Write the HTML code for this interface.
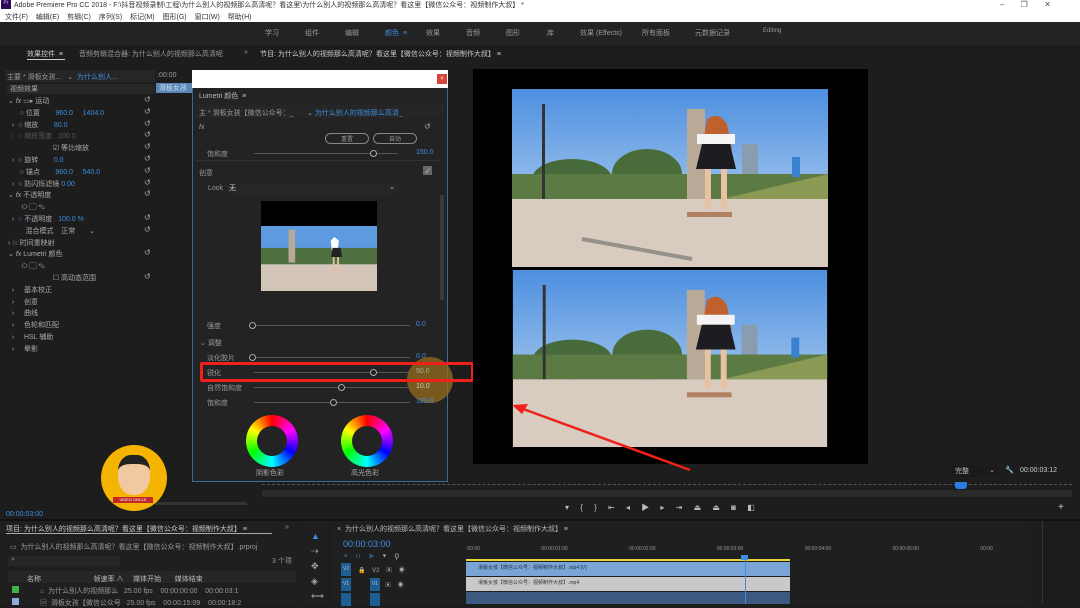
<!DOCTYPE html><html><head><meta charset="utf-8"><style>
*{margin:0;padding:0;box-sizing:border-box}
body{width:1080px;height:604px;background:#1d1d1d;position:relative;overflow:hidden;font-family:"Liberation Sans","Noto Sans CJK SC",sans-serif;font-size:7px;color:#9a9a9a}
.a{position:absolute;white-space:nowrap}
.b{color:#3c8fe0}
.hl{position:absolute;height:1px;background:#555}
.knob{position:absolute;width:7px;height:7px;border:1.5px solid #aaa;border-radius:50%;background:#222}
</style></head><body>
<!-- title bar -->
<div class="a" style="left:0;top:0;width:1080px;height:22px;background:#fff"></div>
<div class="a" style="left:1px;top:0;width:10px;height:9px;background:#2b0b52;color:#e0a0ff;font-size:5px;text-align:center">Pr</div>
<div class="a" style="left:14px;top:0;font-size:7px;color:#333">Adobe Premiere Pro CC 2018 - F:\抖音视频录制\工程\为什么别人的视频那么高清呢？看这里\为什么别人的视频那么高清呢？看这里【微信公众号：视频制作大叔】 *</div>
<div class="a" style="left:5px;top:12px;font-size:7px;color:#333;word-spacing:6px">文件(F) 编辑(E) 剪辑(C) 序列(S) 标记(M) 图形(G) 窗口(W) 帮助(H)</div>
<div class="a" style="left:1000px;top:0;font-size:8px;color:#555;word-spacing:14px">– ❐ ✕</div>
<!-- workspace bar -->
<div class="a" style="left:0;top:22px;width:1080px;height:23px;background:#232323"></div>
<div class="a" style="left:265px;top:28px;font-size:7px;color:#999">学习</div>
<div class="a" style="left:305px;top:28px;color:#999">组件</div>
<div class="a" style="left:345px;top:28px;color:#999">编辑</div>
<div class="a" style="left:385px;top:28px;color:#3c8fe0">颜色 &nbsp;≡</div>
<div class="a" style="left:426px;top:28px;color:#999">效果</div>
<div class="a" style="left:466px;top:28px;color:#999">音频</div>
<div class="a" style="left:506px;top:28px;color:#999">图形</div>
<div class="a" style="left:547px;top:28px;color:#999">库</div>
<div class="a" style="left:580px;top:28px;color:#999">效果 (Effects)</div>
<div class="a" style="left:642px;top:28px;color:#999">所有面板</div>
<div class="a" style="left:695px;top:28px;color:#999">元数据记录</div>
<div class="a" style="left:763px;top:28px;color:#999;font-size:6px">Editing</div>
<!-- panel headers -->
<div class="a" style="left:27px;top:49px;color:#ccc">效果控件 &nbsp;≡</div>
<div class="a" style="left:27px;top:59px;width:38px;height:1px;background:#ccc"></div>
<div class="a" style="left:79px;top:49px;color:#999">音频剪辑混合器: 为什么别人的视频那么高清呢</div>
<div class="a" style="left:244px;top:49px;color:#999">»</div>
<div class="a" style="left:260px;top:49px;color:#ccc">节目: 为什么别人的视频那么高清呢？看这里【微信公众号：视频制作大叔】 ≡</div>
<!-- effect controls -->
<div class="a" style="left:5px;top:70px;width:150px;height:12px;background:#262626"></div>
<div class="a" style="left:7px;top:72px;color:#999">主要 * 滑板女孩...&nbsp;&nbsp;&nbsp;⌄&nbsp; <span class="b">为什么别人...</span></div>
<div class="a" style="left:157px;top:72px;color:#999">:00:00</div>
<div class="a" style="left:156px;top:83px;width:36px;height:10px;background:#5a86b8;color:#ccdff0;padding-left:3px">滑板女孩</div>
<div class="a" style="left:7px;top:84px;width:148px;height:10px;background:#262626;padding-left:3px;color:#aaa">视频效果</div>
<div class="a" style="left:8px;top:96px;line-height:11.8px;color:#aaa">
⌄ <i>fx</i> ▭▸ 运动<br>&nbsp;&nbsp;&nbsp;&nbsp;&nbsp;&nbsp;○ 位置 &nbsp;&nbsp;&nbsp;&nbsp;&nbsp;&nbsp;&nbsp;<span class="b">960.0 &nbsp;&nbsp;&nbsp; 1404.0</span><br>&nbsp;&nbsp;›&nbsp;&nbsp;○ 缩放 &nbsp;&nbsp;&nbsp;&nbsp;&nbsp;&nbsp;&nbsp;<span class="b">80.0</span><br><span style="color:#555">&nbsp;&nbsp;›&nbsp;&nbsp;○ 缩放宽度 &nbsp;&nbsp;100.0</span><br>&nbsp;&nbsp;&nbsp;&nbsp;&nbsp;&nbsp;&nbsp;&nbsp;&nbsp;&nbsp;&nbsp;&nbsp;&nbsp;&nbsp;&nbsp;&nbsp;&nbsp;&nbsp;&nbsp;&nbsp;&nbsp;&nbsp;&nbsp;☑ 等比缩放<br>&nbsp;&nbsp;›&nbsp;&nbsp;○ 旋转 &nbsp;&nbsp;&nbsp;&nbsp;&nbsp;&nbsp;&nbsp;<span class="b">0.0</span><br>&nbsp;&nbsp;&nbsp;&nbsp;&nbsp;&nbsp;○ 锚点 &nbsp;&nbsp;&nbsp;&nbsp;&nbsp;&nbsp;&nbsp;<span class="b">960.0 &nbsp;&nbsp;&nbsp; 540.0</span><br>&nbsp;&nbsp;›&nbsp;&nbsp;○ 防闪烁滤镜 <span class="b">0.00</span><br>⌄ <i>fx</i> 不透明度<br>&nbsp;&nbsp;&nbsp;&nbsp;&nbsp;&nbsp;&nbsp;⬭ ▢ ✎<br>&nbsp;&nbsp;›&nbsp;&nbsp;<span class="b">○</span> 不透明度 &nbsp;&nbsp;<span class="b">100.0 %</span><br>&nbsp;&nbsp;&nbsp;&nbsp;&nbsp;&nbsp;&nbsp;&nbsp;&nbsp;混合模式 &nbsp;&nbsp;&nbsp;正常 &nbsp;&nbsp;&nbsp;&nbsp;&nbsp;&nbsp;⌄<br>› <i style="color:#555">fx</i> 时间重映射<br>⌄ <i>fx</i> Lumetri 颜色<br>&nbsp;&nbsp;&nbsp;&nbsp;&nbsp;&nbsp;&nbsp;⬭ ▢ ✎<br>&nbsp;&nbsp;&nbsp;&nbsp;&nbsp;&nbsp;&nbsp;&nbsp;&nbsp;&nbsp;&nbsp;&nbsp;&nbsp;&nbsp;&nbsp;&nbsp;&nbsp;&nbsp;&nbsp;&nbsp;&nbsp;&nbsp;&nbsp;☐ 高动态范围<br>&nbsp;&nbsp;›&nbsp;&nbsp;&nbsp;&nbsp;&nbsp;基本校正<br>&nbsp;&nbsp;›&nbsp;&nbsp;&nbsp;&nbsp;&nbsp;创意<br>&nbsp;&nbsp;›&nbsp;&nbsp;&nbsp;&nbsp;&nbsp;曲线<br>&nbsp;&nbsp;›&nbsp;&nbsp;&nbsp;&nbsp;&nbsp;色轮和匹配<br>&nbsp;&nbsp;›&nbsp;&nbsp;&nbsp;&nbsp;&nbsp;HSL 辅助<br>&nbsp;&nbsp;›&nbsp;&nbsp;&nbsp;&nbsp;&nbsp;晕影</div>
<div class="a" style="left:144px;top:94px;line-height:11.8px;color:#aaa;font-size:8px">↺<br>↺<br>↺<br>↺<br>↺<br>↺<br>↺<br>↺<br>↺<br><br>↺<br>↺<br><br>↺<br><br>↺</div>
<div class="a" style="left:6px;top:511px" ><span class="b">00:00:03:00</span></div>
<div class="a" style="left:155px;top:502px;width:92px;height:3px;background:#333"></div>
<!-- avatar -->
<div class="a" style="left:101px;top:445px;width:66px;height:66px;border-radius:50%;background:#f5b400"></div>
<div class="a" style="left:118px;top:455px;width:32px;height:40px;border-radius:40% 40% 45% 45%;background:#f0c9a0;border-top:9px solid #222"></div>
<div class="a" style="left:113px;top:497px;width:40px;height:6px;background:#c0282a;color:#fff;font-size:4px;text-align:center">VIDEO UNCLE</div>
<!-- lumetri floating window -->
<div class="a" style="left:192px;top:70px;width:256px;height:412px;background:#232323;border:1px solid #3d6a9c"></div>
<div class="a" style="left:192px;top:70px;width:256px;height:18px;background:#fff"></div>
<div class="a" style="left:437px;top:74px;width:10px;height:10px;background:#d9453a;color:#fff;font-size:6px;text-align:center;line-height:10px">×</div>
<div class="a" style="left:199px;top:91px;color:#bbb">Lumetri 颜色 &nbsp;≡</div>
<div class="a" style="left:196px;top:105px;width:248px;height:13px;background:#262626"></div>
<div class="a" style="left:199px;top:108px;color:#999">主 * 滑板女孩【微信公众号：_ &nbsp;&nbsp;&nbsp;&nbsp;&nbsp;&nbsp;⌄ <span class="b">为什么别人的视频那么高清_</span></div>
<div class="a" style="left:199px;top:124px;color:#999"><i>fx</i></div>
<div class="a" style="left:424px;top:122px;color:#aaa;font-size:8px">↺</div>
<div class="a" style="left:325px;top:133px;width:44px;height:11px;border:1px solid #888;border-radius:6px;color:#999;font-size:6px;text-align:center">重置</div>
<div class="a" style="left:373px;top:133px;width:44px;height:11px;border:1px solid #888;border-radius:6px;color:#999;font-size:6px;text-align:center">自动</div>
<div class="a" style="left:207px;top:149px;color:#999">饱和度</div><div class="hl" style="left:254px;top:153px;width:144px"></div><div class="knob" style="left:370px;top:150px"></div><div class="a b" style="left:416px;top:149px">150.0</div>
<div class="a" style="left:196px;top:160px;width:244px;height:1px;background:#333"></div>
<div class="a" style="left:199px;top:168px;color:#999">创意</div>
<div class="a" style="left:423px;top:166px;width:9px;height:9px;background:#666;color:#ddd;font-size:6px;text-align:center">✓</div>
<div class="a" style="left:208px;top:185px;color:#999">Look</div>
<div class="a" style="left:226px;top:183px;width:172px;height:11px;background:#262626;color:#ccc;padding-left:3px">无<span style="float:right;padding-right:3px">⌄</span></div>
<div class="a" style="left:440px;top:195px;width:4px;height:105px;background:#3a3a3a"></div>
<div class="a" style="left:261px;top:201px;width:116px;height:89px;background:#000"></div>
<svg class="a" style="left:261px;top:226px" width="116" height="65" viewBox="0 0 316 178" preserveAspectRatio="none"><rect width="316" height="110" fill="#5d9ae0"/><rect y="60" width="316" height="45" fill="#4f7040"/><rect y="105" width="316" height="73" fill="#d3c6b8"/><rect x="75" y="10" width="18" height="90" fill="#b9aa98"/><path d="M190 40 l10 -10 l12 10 l-4 35 l-14 0z" fill="#fff"/><path d="M195 60 h22 l4 25 h-30z" fill="#222"/><path d="M198 85 v50 M210 85 v50" stroke="#e6c0a0" stroke-width="5"/></svg>
<div class="a" style="left:207px;top:321px;color:#999">强度</div><div class="hl" style="left:254px;top:325px;width:156px"></div><div class="knob" style="left:249px;top:322px"></div><div class="a b" style="left:416px;top:321px">0.0</div>
<div class="a" style="left:200px;top:338px;color:#999">⌄ 调整</div>
<div class="a" style="left:207px;top:353px;color:#999">淡化胶片</div><div class="hl" style="left:254px;top:357px;width:156px"></div><div class="knob" style="left:249px;top:354px"></div><div class="a b" style="left:416px;top:353px">0.0</div>
<div class="a" style="left:207px;top:368px;color:#999">锐化</div><div class="hl" style="left:254px;top:372px;width:156px"></div><div class="knob" style="left:370px;top:369px"></div>
<div class="a" style="left:407px;top:357px;width:46px;height:46px;border-radius:50%;background:rgba(150,110,30,.75)"></div>
<div class="a" style="left:416px;top:368px;color:#aa9">50.0</div>
<div class="a" style="left:207px;top:383px;color:#999">自然饱和度</div><div class="hl" style="left:254px;top:387px;width:156px"></div><div class="knob" style="left:338px;top:384px"></div><div class="a" style="left:416px;top:383px;color:#ccb">10.0</div>
<div class="a" style="left:207px;top:398px;color:#999">饱和度</div><div class="hl" style="left:254px;top:402px;width:156px"></div><div class="knob" style="left:330px;top:399px"></div><div class="a b" style="left:416px;top:398px">100.0</div>
<div class="a" style="left:246px;top:415px;width:52px;height:52px;border-radius:50%;background:conic-gradient(#f00,#f0f,#00f,#0ff,#0f0,#ff0,#f00)"></div>
<div class="a" style="left:257px;top:426px;width:30px;height:30px;border-radius:50%;background:#232323"></div>
<div class="a" style="left:341px;top:415px;width:52px;height:52px;border-radius:50%;background:conic-gradient(#f00,#f0f,#00f,#0ff,#0f0,#ff0,#f00)"></div>
<div class="a" style="left:352px;top:426px;width:30px;height:30px;border-radius:50%;background:#232323"></div>
<div class="a" style="left:256px;top:468px;color:#aaa">阴影色彩</div>
<div class="a" style="left:351px;top:468px;color:#aaa">高光色彩</div>
<!-- red box -->
<div class="a" style="left:200px;top:362px;width:274px;height:20px;border:3px solid #f0201a;border-radius:2px"></div>
<!-- program monitor -->
<div class="a" style="left:473px;top:69px;width:395px;height:395px;background:#000"></div>
<svg class="a" style="left:512px;top:89px" width="316" height="178" viewBox="0 0 316 178"><defs><linearGradient id="s" x1="0" y1="0" x2="0" y2="1"><stop offset="0" stop-color="#4d8fe0"/><stop offset="1" stop-color="#9cc2ec"/></linearGradient></defs><rect width="316" height="110" fill="url(#s)"/><ellipse cx="60" cy="90" rx="40" ry="20" fill="#476a3a"/><ellipse cx="135" cy="85" rx="35" ry="25" fill="#4a6c3b"/><rect y="85" width="316" height="25" fill="#5b7a44"/><path d="M210 110 L316 85 L316 110z" fill="#8a9a55"/><rect x="175" y="20" width="18" height="90" fill="#b9aa98"/><rect x="230" y="55" width="16" height="30" fill="#8a9cb0"/><rect x="30" y="15" width="3" height="95" fill="#333"/><rect y="110" width="316" height="68" fill="#d7ccbf"/><path d="M70 150 L180 170" stroke="#555" stroke-width="4" opacity=".5"/><path d="M195 30 q12 -8 20 5 l5 25 h-30z" fill="#c0602f"/><path d="M185 45 h38 l0 10 h-38z" fill="#f4f4f4"/><path d="M190 55 h28 l6 25 h-40z" fill="#1c1c22"/><path d="M196 80 v40 M212 80 v40" stroke="#e7c3a4" stroke-width="6"/><rect x="175" y="123" width="45" height="5" fill="#b08060"/><path d="M345 100 z"/><rect x="280" y="68" width="8" height="20" fill="#3a82d0"/></svg>
<svg class="a" style="left:512px;top:270px" width="316" height="177" viewBox="0 0 316 178"><rect width="316" height="110" fill="url(#s)"/><ellipse cx="60" cy="90" rx="40" ry="20" fill="#476a3a"/><ellipse cx="135" cy="85" rx="35" ry="25" fill="#4a6c3b"/><rect y="85" width="316" height="25" fill="#5b7a44"/><path d="M210 110 L316 85 L316 110z" fill="#8a9a55"/><rect x="175" y="20" width="18" height="90" fill="#b9aa98"/><rect x="230" y="55" width="16" height="30" fill="#8a9cb0"/><rect x="30" y="15" width="3" height="95" fill="#333"/><rect y="110" width="316" height="68" fill="#d7ccbf"/><path d="M195 30 q12 -8 20 5 l5 25 h-30z" fill="#c0602f"/><path d="M185 45 h38 l0 10 h-38z" fill="#f4f4f4"/><path d="M190 55 h28 l6 25 h-40z" fill="#1c1c22"/><path d="M196 80 v40 M212 80 v40" stroke="#e7c3a4" stroke-width="6"/><rect x="175" y="123" width="45" height="5" fill="#b08060"/><rect x="280" y="68" width="8" height="20" fill="#3a82d0"/></svg>
<svg class="a" style="left:0;top:0" width="1080" height="604"><path d="M690 470 L515 406" stroke="#f0201a" stroke-width="2.5"/><path d="M512 405 L528 404 L522 414z" fill="#f0201a"/></svg>
<div class="a" style="left:952px;top:466px;width:46px;height:11px;background:#1a1a1a;color:#bbb;padding-left:3px">完整<span style="float:right;padding-right:3px">⌄</span></div>
<div class="a" style="left:1005px;top:466px;color:#bbb">🔧</div>
<div class="a" style="left:1020px;top:467px;color:#ccc">00:00:03:12</div>
<div class="a" style="left:262px;top:484px;width:810px;height:6px;border-top:1px dashed #555"></div>
<div class="a" style="left:955px;top:482px;width:12px;height:7px;background:#2c7be0;border-radius:0 0 3px 3px"></div>
<div class="a" style="left:262px;top:490px;width:810px;height:7px;background:#2a2a2a"></div>
<div class="a" style="left:565px;top:502px;color:#bbb;font-size:8px;word-spacing:9px">▾ { } ⇤ ◂ ▶ ▸ ⇥ ⏏ ⏏ ◙ ◧</div>
<div class="a" style="left:1058px;top:502px;color:#ccc;font-size:10px">+</div>
<!-- bottom -->
<div class="a" style="left:0;top:519px;width:1080px;height:2px;background:#111"></div>
<div class="a" style="left:0;top:521px;width:300px;height:83px;background:#1f1f1f"></div>
<div class="a" style="left:6px;top:524px;color:#ccc">项目: 为什么别人的视频那么高清呢？看这里【微信公众号：视频制作大叔】 ≡</div>
<div class="a" style="left:6px;top:533px;width:266px;height:1px;background:#aaa"></div>
<div class="a" style="left:285px;top:524px">»</div>
<div class="a" style="left:10px;top:542px;color:#999">▭ &nbsp;为什么别人的视频那么高清呢？看这里【微信公众号：视频制作大叔】.prproj</div>
<div class="a" style="left:8px;top:556px;width:112px;height:10px;background:#262626;padding-left:3px">⌕</div>
<div class="a" style="left:272px;top:556px">3 个项</div>
<div class="a" style="left:8px;top:571px;width:288px;height:12px;background:#262626"></div>
<div class="a" style="left:27px;top:574px;color:#bbb;word-spacing:0">名称 &nbsp;&nbsp;&nbsp;&nbsp;&nbsp;&nbsp;&nbsp;&nbsp;&nbsp;&nbsp;&nbsp;&nbsp;&nbsp;&nbsp;&nbsp;&nbsp;&nbsp;&nbsp;&nbsp;&nbsp;&nbsp;&nbsp;&nbsp;&nbsp;&nbsp;&nbsp;帧速率 ∧ &nbsp;&nbsp;&nbsp;&nbsp;媒体开始 &nbsp;&nbsp;&nbsp;&nbsp;&nbsp;&nbsp;媒体结束</div>
<div class="a" style="left:12px;top:586px;width:7px;height:7px;background:#3bb54a"></div>
<div class="a" style="left:40px;top:586px;color:#999">⌂ &nbsp;为什么别人的视频那么 &nbsp;&nbsp;25.00 fps &nbsp;&nbsp;&nbsp;00:00:00:00 &nbsp;&nbsp;&nbsp;00:00:03:1</div>
<div class="a" style="left:12px;top:598px;width:7px;height:7px;background:#8fa8e0"></div>
<div class="a" style="left:40px;top:598px;color:#999">▤ &nbsp;滑板女孩【微信公众号 &nbsp;&nbsp;25.00 fps &nbsp;&nbsp;&nbsp;00:00:15:09 &nbsp;&nbsp;&nbsp;00:00:18:2</div>
<div class="a" style="left:302px;top:521px;width:26px;height:83px;background:#1f1f1f;color:#aaa;font-size:9px;line-height:15px;padding:8px 0 0 9px"><span style="color:#3c8fe0">▲</span><br>⇢<br>✥<br>◈<br>⟷</div>
<div class="a" style="left:331px;top:521px;width:700px;height:83px;background:#1f1f1f"></div>
<div class="a" style="left:337px;top:524px;color:#bbb">× &nbsp;为什么别人的视频那么高清呢？看这里【微信公众号：视频制作大叔】 ≡</div>
<div class="a" style="left:343px;top:539px;color:#3c8fe0;font-size:9px">00:00:03:00</div>
<div class="a" style="left:343px;top:551px;color:#3c8fe0;font-size:8px;word-spacing:6px">⫞ ∩ ⊳ <span style="color:#bbb">▾ ⚲</span></div>
<div class="a" style="left:466px;top:546px;font-size:5px;color:#999;word-spacing:60px">:00:00 00:00:01:00 00:00:02:00 00:00:03:00 00:00:04:00 00:00:05:00 00:00</div>
<div class="a" style="left:466px;top:559px;width:324px;height:2px;background:#e6d43a"></div>
<div class="a" style="left:341px;top:563px;width:10px;height:13px;background:#1f5d95;color:#bbb;font-size:5px;text-align:center;line-height:13px">V2</div>
<div class="a" style="left:341px;top:578px;width:10px;height:13px;background:#1f5d95;color:#bbb;font-size:5px;text-align:center;line-height:13px">V1</div>
<div class="a" style="left:370px;top:578px;width:10px;height:13px;background:#1f5d95;color:#bbb;font-size:5px;text-align:center;line-height:13px">V1</div>
<div class="a" style="left:341px;top:593px;width:10px;height:13px;background:#1f5d95"></div>
<div class="a" style="left:370px;top:593px;width:10px;height:13px;background:#1f5d95"></div>
<div class="a" style="left:358px;top:565px;color:#aaa;font-size:6px;word-spacing:5px">🔒 V2 ▣ ◉</div>
<div class="a" style="left:385px;top:580px;color:#aaa;font-size:6px;word-spacing:5px">▣ ◉</div>
<div class="a" style="left:466px;top:562px;width:324px;height:14px;background:#7aa4d6;color:#234;font-size:5px;padding:2px 0 0 12px">滑板女孩【微信公众号：视频制作大叔】.mp4 [V]</div>
<div class="a" style="left:466px;top:577px;width:324px;height:14px;background:#c8c8c8;color:#333;font-size:5px;padding:2px 0 0 12px">滑板女孩【微信公众号：视频制作大叔】.mp4</div>
<div class="a" style="left:466px;top:592px;width:324px;height:12px;background:#3c5a80"></div>
<div class="a" style="left:745px;top:556px;width:1px;height:48px;background:#3c8fe0"></div>
<div class="a" style="left:741px;top:555px;width:7px;height:5px;background:#3c8fe0"></div>
<div class="a" style="left:1042px;top:521px;width:38px;height:83px;background:#1c1c1c;border-left:1px solid #333"></div>
</body></html>
